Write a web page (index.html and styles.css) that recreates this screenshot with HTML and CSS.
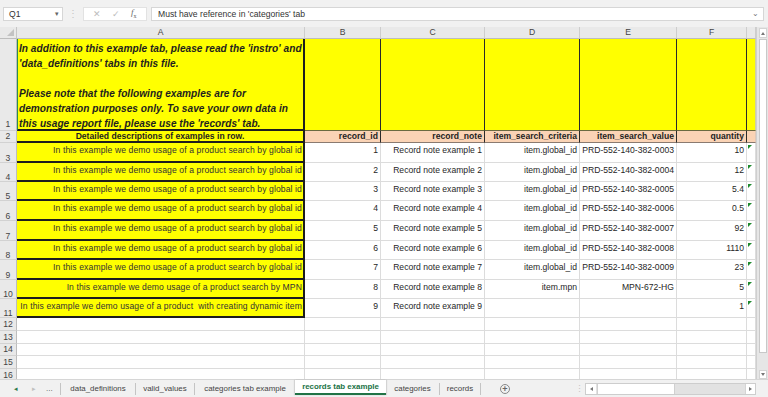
FILE: index.html
```html
<!DOCTYPE html>
<html>
<head>
<meta charset="utf-8">
<link rel="stylesheet" href="styles.css">
</head>
<body>
<div class="fbar">
  <div class="namebox"><span>Q1</span><span class="dd">&#9662;</span></div>
  <div class="vdots">&#8942;</div>
  <div class="btns"><span class="ico x">&#10005;</span><span class="ico ok">&#10003;</span><span class="ico fx"><i>f</i><sub>x</sub></span></div>
  <div class="finput"><span>Must have reference in 'categories' tab</span><span class="chev">&#8964;</span></div>
</div>
<div class="main">
  <div class="grid">
    <div class="corner"><i class="ctri"></i></div>
    <div class="ch">A</div><div class="ch">B</div><div class="ch">C</div><div class="ch">D</div><div class="ch">E</div><div class="ch">F</div><div class="ch"></div>

    <div class="rh">1</div>
    <div class="c a a1"><p>In addition to this example tab, please read the 'instro' and<br>'data_definitions' tabs in this file.<br>&nbsp;<br>Please note that the following examples are for<br>demonstration purposes only. To save your own data in<br>this usage report file, please use the 'records' tab.</p></div>
    <div class="c y1"></div><div class="c y1"></div><div class="c y1"></div><div class="c y1"></div><div class="c y1"></div><div class="c y1 ylast"></div>

    <div class="rh">2</div>
    <div class="c a a2">Detailed descriptions of examples in row.</div>
    <div class="c hd">record_id</div><div class="c hd">record_note</div><div class="c hd">item_search_criteria</div><div class="c hd">item_search_value</div><div class="c hd">quantity</div><div class="c hd hlast"></div>

    <div class="rh t">3</div>
    <div class="c a ad">In this example we demo usage of a product search by global id</div>
    <div class="c">1</div><div class="c">Record note example 1</div><div class="c">item.global_id</div><div class="c">PRD-552-140-382-0003</div><div class="c">10</div><div class="c gt"><i class="tri"></i></div>

    <div class="rh t">4</div>
    <div class="c a ad">In this example we demo usage of a product search by global id</div>
    <div class="c">2</div><div class="c">Record note example 2</div><div class="c">item.global_id</div><div class="c">PRD-552-140-382-0004</div><div class="c">12</div><div class="c gt"><i class="tri"></i></div>

    <div class="rh t">5</div>
    <div class="c a ad">In this example we demo usage of a product search by global id</div>
    <div class="c">3</div><div class="c">Record note example 3</div><div class="c">item.global_id</div><div class="c">PRD-552-140-382-0005</div><div class="c">5.4</div><div class="c gt"><i class="tri"></i></div>

    <div class="rh t">6</div>
    <div class="c a ad">In this example we demo usage of a product search by global id</div>
    <div class="c">4</div><div class="c">Record note example 4</div><div class="c">item.global_id</div><div class="c">PRD-552-140-382-0006</div><div class="c">0.5</div><div class="c gt"><i class="tri"></i></div>

    <div class="rh t">7</div>
    <div class="c a ad">In this example we demo usage of a product search by global id</div>
    <div class="c">5</div><div class="c">Record note example 5</div><div class="c">item.global_id</div><div class="c">PRD-552-140-382-0007</div><div class="c">92</div><div class="c gt"><i class="tri"></i></div>

    <div class="rh t">8</div>
    <div class="c a ad">In this example we demo usage of a product search by global id</div>
    <div class="c">6</div><div class="c">Record note example 6</div><div class="c">item.global_id</div><div class="c">PRD-552-140-382-0008</div><div class="c">1110</div><div class="c gt"><i class="tri"></i></div>

    <div class="rh t">9</div>
    <div class="c a ad">In this example we demo usage of a product search by global id</div>
    <div class="c">7</div><div class="c">Record note example 7</div><div class="c">item.global_id</div><div class="c">PRD-552-140-382-0009</div><div class="c">23</div><div class="c gt"><i class="tri"></i></div>

    <div class="rh t">10</div>
    <div class="c a ad">In this example we demo usage of a product search by MPN</div>
    <div class="c">8</div><div class="c">Record note example 8</div><div class="c">item.mpn</div><div class="c">MPN-672-HG</div><div class="c">5</div><div class="c gt"><i class="tri"></i></div>

    <div class="rh t">11</div>
    <div class="c a ad">In this example we demo usage of a product&nbsp; with creating dynamic item</div>
    <div class="c">9</div><div class="c">Record note example 9</div><div class="c"></div><div class="c"></div><div class="c">1</div><div class="c gt"><i class="tri"></i></div>

    <div class="rh">12</div><div class="c"></div><div class="c"></div><div class="c"></div><div class="c"></div><div class="c"></div><div class="c"></div><div class="c"></div>
    <div class="rh">13</div><div class="c"></div><div class="c"></div><div class="c"></div><div class="c"></div><div class="c"></div><div class="c"></div><div class="c"></div>
    <div class="rh">14</div><div class="c"></div><div class="c"></div><div class="c"></div><div class="c"></div><div class="c"></div><div class="c"></div><div class="c"></div>
    <div class="rh">15</div><div class="c"></div><div class="c"></div><div class="c"></div><div class="c"></div><div class="c"></div><div class="c"></div><div class="c"></div>
    <div class="rh">16</div><div class="c"></div><div class="c"></div><div class="c"></div><div class="c"></div><div class="c"></div><div class="c"></div><div class="c"></div>
  </div>
  <div class="vs">
    <div class="vup"><i class="aup"></i></div>
    <div class="vthumb"></div>
    <div class="vtrack"></div>
    <div class="vdn"><i class="adn"></i></div>
  </div>
</div>
<div class="tabs">
  <div class="nav"><span class="nl">&#9666;</span><span class="nr">&#9656;</span><span class="more">...</span></div>
  <div class="sep"></div>
  <div class="tab t1">data_definitions</div>
  <div class="sep"></div>
  <div class="tab t2">valid_values</div>
  <div class="sep"></div>
  <div class="tab t3">categories tab example</div>
  <div class="tab active">records tab example</div>
  <div class="tab t5">categories</div>
  <div class="sep"></div>
  <div class="tab t6">records</div>
  <div class="sep"></div>
  <div class="addarea"><span class="plus">+</span></div>
  <div class="hdots">&#8942;</div>
  <div class="hs">
    <div class="hl"><i class="al"></i></div>
    <div class="hthumb"></div>
    <div class="htrack"></div>
    <div class="hr"><i class="ar"></i></div>
  </div>
</div>
</body>
</html>
```
FILE: styles.css
```css
* { box-sizing: border-box; margin: 0; padding: 0; }
html, body { width: 768px; height: 397px; overflow: hidden; }
body {
  background: #f1f1f1;
  font-family: "Liberation Sans", Arial, sans-serif;
  font-size: 8.6px;
  color: #262626;
}

/* formula bar */
.fbar { height: 27px; display: flex; align-items: flex-start; padding-top: 7px; }
.namebox {
  margin-left: 3px; width: 60px; height: 14px; background: #fff;
  border: 1px solid #d6d6d6; display: flex; align-items: center;
  justify-content: space-between; padding: 0 3px 0 5px; color: #333;
}
.namebox .dd { font-size: 7px; color: #666; }
.vdots { width: 20px; text-align: center; color: #c4c4c4; font-size: 10px; line-height: 14px; }
.btns {
  width: 64px; height: 14px; background: #fff; border: 1px solid #e2e2e2;
  display: flex; align-items: center; justify-content: space-around; padding: 0 4px;
}
.ico { color: #bdbdbd; font-size: 9px; line-height: 12px; }
.ico.fx { color: #666; font-family: "Liberation Serif", serif; font-size: 9px; }
.ico.fx sub { font-size: 6px; }
.finput {
  margin-left: 4px; width: 613px; height: 14px; background: #fff;
  border: 1px solid #d6d6d6; display: flex; align-items: center;
  justify-content: space-between; padding: 0 4px 0 6px; color: #333;
}
.chev { color: #777; font-size: 8px; line-height: 8px; }

/* main grid */
.main { display: flex; height: 352px; }
.grid {
  width: 756px; height: 352px; overflow: hidden; background: #fff;
  display: grid;
  grid-template-columns: 17px 288px 76px 104px 95px 97px 70px 9px;
  grid-template-rows: 12px 92px 12px 20px 19px 19px 20px 20px 19px 20px 19px 19px 13px 13px 12px 13px 13px;
}
.corner { background: #e9e9e9; border-right: 1px solid #c6c6c6; border-bottom: 1px solid #bdbdbd; display: flex; align-items: flex-end; justify-content: flex-end; padding: 0 2px 2px 0; }
.ctri { width: 0; height: 0; border-bottom: 7px solid #c2c2c2; border-left: 7px solid transparent; }
.ch {
  background: #e9e9e9; border-right: 1px solid #cdcdcd; border-bottom: 1px solid #bdbdbd;
  display: flex; align-items: center; justify-content: center; color: #444; line-height: 11px;
}
.rh {
  background: #e9e9e9; border-right: 1px solid #bdbdbd; border-bottom: 1px solid #d2d2d2;
  display: flex; align-items: flex-end; justify-content: center; color: #444; line-height: 11px;
}
.rh.t { line-height: 8px; }
.c {
  border-right: 1px solid #dcdcdc; border-bottom: 1px solid #dcdcdc;
  display: flex; justify-content: flex-end; align-items: flex-start;
  padding: 2px 2px 0 2px; white-space: nowrap; overflow: hidden; line-height: 11px;
}
.a { background: #ffff00; border-right: 2px solid #1e1e1e; border-bottom: 2px solid #1e1e1e; color: #333; padding-right: 1px; }
.ad { letter-spacing: 0.1px; }
.a1 {
  justify-content: flex-start; align-items: flex-start; white-space: normal;
  border-left: 1px solid #2d8b4e; padding: 2px 0 0 1px;
  font-weight: bold; font-style: italic; font-size: 10.1px; line-height: 15px; color: #1e1e1e;
  letter-spacing: 0.03px;
}
.a2 { justify-content: center; align-items: center; font-weight: bold; padding: 0; color: #1e1e1e; }
.y1 { background: #ffff00; border-right: 1px solid #2a2a2a; border-bottom: 1px solid #6a6a40; }
.ylast { border-right: 1px solid #d0d0a0; }
.hd { background: #fad3b5; font-weight: bold; border-right: 1px solid #2a2a2a; border-bottom: 1px solid #8a7a70; align-items: center; padding-top: 0; color: #1e1e1e; }
.hlast { border-right: 1px solid #e0c8b8; }
.gt { justify-content: flex-start; padding: 2px 0 0 1px; }
.tri { display: block; width: 0; height: 0; border-top: 4px solid #1f8a2e; border-right: 4px solid transparent; }

/* vertical scrollbar */
.vs {
  width: 12px; height: 352px; display: flex; flex-direction: column;
  background: #e6e6e6; border-left: 1px solid #cfcfcf; padding: 1px 1px 0 2px;
}
.vup, .vdn { height: 10px; background: #fff; border: 1px solid #d4d4d4; display: flex; align-items: center; justify-content: center; }
.vdn { height: 9px; margin-top: auto; }
.aup { width: 0; height: 0; border-left: 2.5px solid transparent; border-right: 2.5px solid transparent; border-bottom: 3px solid #777; }
.adn { width: 0; height: 0; border-left: 2.5px solid transparent; border-right: 2.5px solid transparent; border-top: 3px solid #777; }
.vthumb { height: 314px; background: #fff; border: 1px solid #c8c8c8; margin-top: 1px; }
.vtrack { flex: 1; }

/* sheet tabs */
.tabs {
  height: 18px; display: flex; align-items: stretch; background: #f1f1f1;
  border-top: 1px solid #d6d6d6; font-size: 7.9px; color: #444;
}
.nav { width: 60px; display: flex; align-items: center; padding-left: 14px; }
.nl { color: #2d7a4a; font-size: 7px; width: 18px; }
.nr { color: #c0c0c0; font-size: 7px; width: 14px; }
.more { color: #555; font-size: 8px; }
.sep { width: 1px; height: 12px; background: #c4c4c4; align-self: center; }
.tab { display: flex; align-items: center; justify-content: center; }
.t1 { width: 74px; }
.t2 { width: 58px; }
.t3 { width: 100px; }
.active {
  width: 91px; background: #fff; color: #217346; font-weight: bold;
  border-bottom: 2px solid #217346; margin-bottom: 2px;
  box-shadow: -1px 0 1px rgba(0,0,0,0.12), 1px 0 1px rgba(0,0,0,0.12);
}
.t5 { width: 53px; }
.t6 { width: 40px; }
.addarea { width: 94px; display: flex; align-items: center; padding-left: 19px; }
.plus {
  width: 10px; height: 10px; border: 1px solid #888; border-radius: 50%;
  display: flex; align-items: center; justify-content: center; color: #666;
  font-size: 9px; line-height: 8px; font-weight: bold;
}
.hdots { width: 10px; color: #c4c4c4; font-size: 9px; display: flex; align-items: center; }
.hs {
  width: 171px; height: 12px; align-self: center; display: flex;
  background: #e2e2e2; border: 1px solid #cdcdcd;
}
.hl, .hr { width: 10px; background: #fff; display: flex; align-items: center; justify-content: center; }
.hr { margin-left: auto; border-left: 1px solid #d4d4d4; }
.al { width: 0; height: 0; border-top: 2.5px solid transparent; border-bottom: 2.5px solid transparent; border-right: 3px solid #777; }
.ar { width: 0; height: 0; border-top: 2.5px solid transparent; border-bottom: 2.5px solid transparent; border-left: 3px solid #777; }
.hthumb { width: 78px; margin-left: 1px; background: #fff; border-left: 1px solid #d0d0d0; border-right: 1px solid #d0d0d0; }
.htrack { flex: 1; }
```
